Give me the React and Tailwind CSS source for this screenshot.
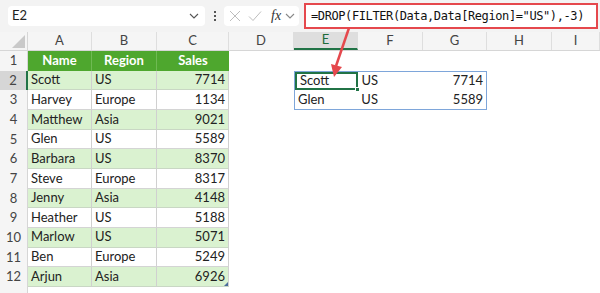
import React from 'react';

const cols = [
  { key: 'A', w: 'w-[64px]' },
  { key: 'B', w: 'w-[65px]' },
  { key: 'C', w: 'w-[72px]' },
  { key: 'D', w: 'w-[65px]' },
  { key: 'E', w: 'w-[64px]' },
  { key: 'F', w: 'w-[65px]' },
  { key: 'G', w: 'w-[64px]' },
  { key: 'H', w: 'w-[65px]' },
  { key: 'I', w: 'flex-1' },
];

const data = [
  ['Scott', 'US', 7714],
  ['Harvey', 'Europe', 1134],
  ['Matthew', 'Asia', 9021],
  ['Glen', 'US', 5589],
  ['Barbara', 'US', 8370],
  ['Steve', 'Europe', 8317],
  ['Jenny', 'Asia', 4148],
  ['Heather', 'US', 5188],
  ['Marlow', 'US', 5071],
  ['Ben', 'Europe', 5249],
  ['Arjun', 'Asia', 6926],
];

const spill = [
  ['Scott', 'US', 7714],
  ['Glen', 'US', 5589],
];

const Chevron = ({ className }) => (
  <svg width="10" height="6" viewBox="0 0 10 6" className={className}>
    <path d="M1 1l4 4 4-4" fill="none" stroke="currentColor" strokeWidth="1.1" />
  </svg>
);

const TopBar = () => (
  <div className="h-[32px] bg-[#f3f3f3] flex items-center pl-[8px]">
    <div className="w-[197px] h-[20px] bg-white rounded-[4px] flex items-center justify-between pl-[4px] pr-[6px] text-[13px] text-[#222]">
      <span>E2</span>
      <Chevron className="text-[#555]" />
    </div>
    <div className="w-[19px] flex flex-col items-center gap-[2px]">
      <span className="w-[2px] h-[2px] bg-[#555]" />
      <span className="w-[2px] h-[2px] bg-[#555]" />
      <span className="w-[2px] h-[2px] bg-[#555]" />
    </div>
    <div className="w-[75px] h-[20px] bg-white rounded-[4px] flex items-center pl-[5px] pr-[3px] text-[#bdbdbd]">
      <svg width="12" height="12" viewBox="0 0 12 12">
        <path d="M1 1l10 10M11 1L1 11" stroke="currentColor" strokeWidth="1" fill="none" />
      </svg>
      <svg width="14" height="12" viewBox="0 0 14 12" className="ml-[7px]">
        <path d="M1 6.5l4 4L13 1.5" stroke="currentColor" strokeWidth="1" fill="none" />
      </svg>
      <span className="ml-[9px] text-[14px] italic text-[#333] font-['Liberation_Serif',serif] leading-none">fx</span>
      <Chevron className="ml-[4px] text-[#888]" />
    </div>
    <div className="ml-[5px] w-[294px] h-[26px] border-2 border-[#e5484d] bg-white flex items-center pl-[5px] font-['DejaVu_Sans_Mono',monospace] text-[12px] tracking-[-0.4px] text-[#111]">
      =DROP(FILTER(Data,Data[Region]="US"),-3)
    </div>
  </div>
);

const HeaderRow = () => (
  <div className="h-[19px] flex bg-[#f5f5f5] border-b border-[#d6d6d6] text-[13px] text-[#444]">
    <div className="w-[28px] border-r border-[#d6d6d6] relative">
      <div className="absolute right-[2px] bottom-[2px] w-0 h-0 border-l-[13px] border-l-transparent border-b-[13px] border-b-[#c9c9c9]" />
    </div>
    {cols.map((c) => (
      <div
        key={c.key}
        className={`${c.w} flex items-center justify-center border-r border-[#dedede] ${
          c.key === 'E' ? 'bg-[#dedede] text-[#1e6b3a] border-b-2 border-b-[#217346]' : ''
        }`}
      >
        {c.key}
      </div>
    ))}
  </div>
);

const Cell = ({ w, right, children, className = '' }) => (
  <div className={`${w} h-full flex items-center px-[3px] ${right ? 'justify-end' : ''} ${className}`}>
    {children}
  </div>
);

export default function App() {
  const rows = [];
  for (let r = 1; r <= 13; r++) {
    const band = r === 1 ? 'header' : r % 2 === 0 ? 'green' : 'white';
    const d = r > 1 && r <= 12 ? data[r - 2] : null;
    const s = r === 2 || r === 3 ? spill[r - 2] : null;
    const tableBg =
      band === 'header'
        ? 'bg-[#4ea72e] text-white font-bold'
        : band === 'green' && r <= 12
        ? 'bg-[#daf2d0] border-b border-[#c9d7c4]'
        : r <= 12
        ? 'bg-white border-b border-[#d4d4d4]'
        : '';
    rows.push(
      <div key={r} className="h-[19.67px] flex text-[13px] text-[#222]">
        <div
          className={`w-[28px] h-full flex items-center justify-center text-[#444] border-r border-[#d6d6d6] ${
            r === 2 ? 'bg-[#d6d6d6] border-r-2 border-r-[#217346]' : 'bg-[#f5f5f5]'
          }`}
        >
          {r <= 12 ? r : ''}
        </div>
        {r === 1 ? (
          <>
            <Cell w="w-[64px]" className={`${tableBg} justify-center border-r border-[#6fba53]`}>Name</Cell>
            <Cell w="w-[65px]" className={`${tableBg} justify-center border-r border-[#6fba53]`}>Region</Cell>
            <Cell w="w-[72px]" className={`${tableBg} justify-center`}>Sales</Cell>
          </>
        ) : d ? (
          <>
            <Cell w="w-[64px]" className={`${tableBg} border-r border-r-[#d0d0d0]`}>{d[0]}</Cell>
            <Cell w="w-[65px]" className={`${tableBg} border-r border-r-[#d0d0d0]`}>{d[1]}</Cell>
            <Cell w="w-[72px]" right className={`${tableBg} border-r border-r-[#d0d0d0] relative`}>
              {d[2]}
              {r === 12 && (
                <span className="absolute right-0 bottom-0 w-0 h-0 border-l-[4px] border-l-transparent border-b-[4px] border-b-[#4a6b9a]" />
              )}
            </Cell>
          </>
        ) : (
          <div className="w-[201px]" />
        )}
        <div className="w-[65px]" />
        {s ? (
          <div
            className={`flex w-[193px] h-full border-x border-[#7ea6da] ${r === 2 ? 'border-t' : 'border-b'} relative`}
          >
            <Cell w="w-[64px]" className={r === 2 ? 'border-2 border-[#217346] relative' : ''}>
              {s[0]}
              {r === 2 && (
                <span className="absolute right-[-4px] bottom-[-4px] w-[5px] h-[5px] bg-[#217346] border border-white" />
              )}
            </Cell>
            <Cell w="w-[65px]">{s[1]}</Cell>
            <Cell w="w-[64px]" right>{s[2]}</Cell>
          </div>
        ) : null}
      </div>
    );
  }

  return (
    <div className="w-[600px] h-[293px] overflow-hidden bg-white relative font-['Lato',sans-serif]">
      <TopBar />
      <HeaderRow />
      {rows}
      <svg className="absolute left-0 top-0 pointer-events-none" width="600" height="293">
        <line x1="349" y1="28" x2="336" y2="66" stroke="#e5484d" strokeWidth="2.5" />
        <path d="M331 64 L334 77 L342 67 Z" fill="#e5484d" />
      </svg>
    </div>
  );
}
